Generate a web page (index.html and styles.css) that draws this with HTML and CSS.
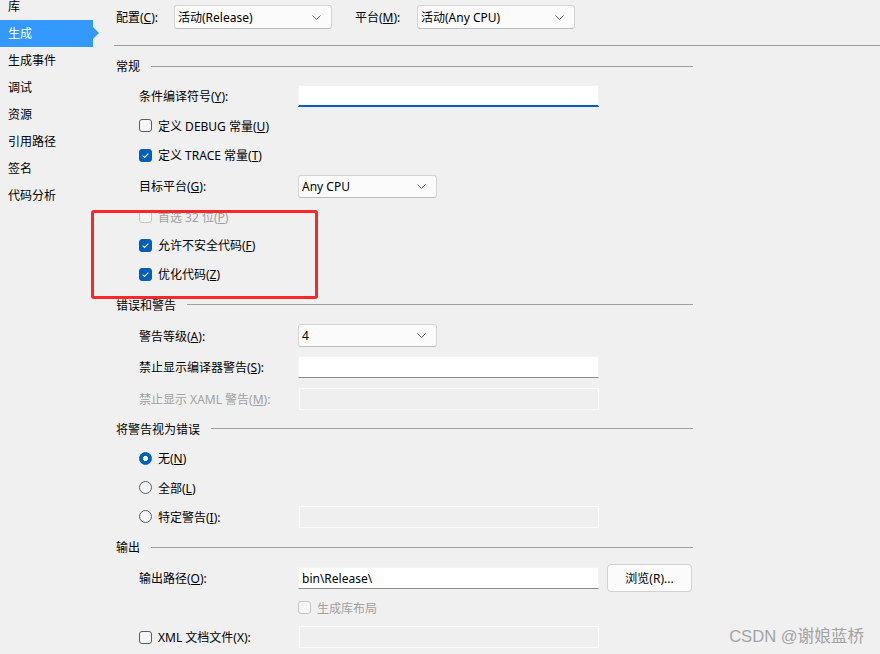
FILE: index.html
```html
<!DOCTYPE html>
<html lang="zh-CN">

<head>
    <meta charset="UTF-8">
    <title>生成</title>
    <link rel="stylesheet" href="styles.css">
</head>

<body>
    <div class="window">
        <ul class="nav">
            <li>库</li>
            <li class="active">生成</li>
            <li>生成事件</li>
            <li>调试</li>
            <li>资源</li>
            <li>引用路径</li>
            <li>签名</li>
            <li>代码分析</li>
        </ul>

        <div class="page">
            <div class="toolbar">
                <span class="tb-label">配置(<u>C</u>):</span>
                <div class="select wide"><span>活动(Release)</span><svg class="chev" width="9" height="5" viewBox="0 0 9 5"><path d="M0.5 0.5 L4.5 4.5 L8.5 0.5" fill="none" stroke="#5a5a5a"/></svg></div>
                <span class="tb-label second">平台(<u>M</u>):</span>
                <div class="select wide"><span>活动(Any CPU)</span><svg class="chev" width="9" height="5" viewBox="0 0 9 5"><path d="M0.5 0.5 L4.5 4.5 L8.5 0.5" fill="none" stroke="#5a5a5a"/></svg></div>
            </div>
            <div class="rule"></div>

            <div class="form">
                <div class="heading">常规</div>
                <div class="row">
                    <span class="label">条件编译符号(<u>Y</u>):</span>
                    <div class="input focused"></div>
                </div>
                <div class="row s">
                    <span class="box"></span><span>定义 DEBUG 常量(<u>U</u>)</span>
                </div>
                <div class="row">
                    <span class="box on"><svg width="11" height="11" viewBox="0 0 11 11"><path d="M2.6 5.7 L4.5 7.5 L8.4 3.6" fill="none" stroke="#fff" stroke-width="1.1"/></svg></span><span>定义 TRACE 常量(<u>T</u>)</span>
                </div>
                <div class="row xl">
                    <span class="label">目标平台(<u>G</u>):</span>
                    <div class="select small"><span>Any CPU</span><svg class="chev" width="9" height="5" viewBox="0 0 9 5"><path d="M0.5 0.5 L4.5 4.5 L8.5 0.5" fill="none" stroke="#5a5a5a"/></svg></div>
                </div>
                <div class="row s disabled">
                    <span class="box"></span><span>首选 32 位(<u>P</u>)</span>
                </div>
                <div class="row m">
                    <span class="box on"><svg width="11" height="11" viewBox="0 0 11 11"><path d="M2.6 5.7 L4.5 7.5 L8.4 3.6" fill="none" stroke="#fff" stroke-width="1.1"/></svg></span><span>允许不安全代码(<u>F</u>)</span>
                </div>
                <div class="row">
                    <span class="box on"><svg width="11" height="11" viewBox="0 0 11 11"><path d="M2.6 5.7 L4.5 7.5 L8.4 3.6" fill="none" stroke="#fff" stroke-width="1.1"/></svg></span><span>优化代码(<u>Z</u>)</span>
                </div>

                <div class="heading l">错误和警告</div>
                <div class="row l">
                    <span class="label">警告等级(<u>A</u>):</span>
                    <div class="select small"><span>4</span><svg class="chev" width="9" height="5" viewBox="0 0 9 5"><path d="M0.5 0.5 L4.5 4.5 L8.5 0.5" fill="none" stroke="#5a5a5a"/></svg></div>
                </div>
                <div class="row xl">
                    <span class="label">禁止显示编译器警告(<u>S</u>):</span>
                    <div class="input"></div>
                </div>
                <div class="row l disabled">
                    <span class="label">禁止显示 XAML 警告(<u>M</u>):</span>
                    <div class="input off"></div>
                </div>

                <div class="heading s">将警告视为错误</div>
                <div class="row">
                    <span class="box radio on"></span><span>无(<u>N</u>)</span>
                </div>
                <div class="row s">
                    <span class="box radio"></span><span>全部(<u>L</u>)</span>
                </div>
                <div class="row s">
                    <span class="opt"><span class="box radio"></span><span>特定警告(<u>I</u>):</span></span>
                    <div class="input off"></div>
                </div>

                <div class="heading xl">输出</div>
                <div class="row">
                    <span class="label">输出路径(<u>O</u>):</span>
                    <div class="input"><span>bin\Release\</span></div>
                    <button class="btn">浏览(R)...</button>
                </div>
                <div class="row s disabled">
                    <span class="label"></span>
                    <span class="box"></span><span>生成库布局</span>
                </div>
                <div class="row">
                    <span class="opt"><span class="box"></span><span>XML 文档文件(X):</span></span>
                    <div class="input off"></div>
                </div>
            </div>
        </div>
    </div>

    <!-- red highlight drawn over the screenshot -->
    <div class="mark"></div>
    <div class="watermark">CSDN @谢娘蓝桥</div>
</body>

</html>
```

FILE: styles.css
```css
body {
    margin: 0;
    background-color: #f0f0f0;
    font-family: "Noto Sans", "Noto Sans CJK SC", sans-serif;
    font-size: 12px;
    color: #000;
    overflow: hidden;
}

u {
    text-underline-offset: 1px;
}

.window {
    display: flex;
    height: 654px;
}

/* left navigation */
.nav {
    list-style: none;
    margin: -7px 0 0 0;
    padding: 0;
    width: 114px;
    flex-shrink: 0;
}

.nav li {
    position: relative;
    width: 93px;
    height: 27px;
    line-height: 27px;
    padding-left: 8px;
    box-sizing: border-box;
}

.nav li.active {
    background-color: #3399ff;
    color: white;
}

.nav li.active::after {
    content: "";
    position: absolute;
    right: -6px;
    top: 7px;
    border-left: 6px solid #3399ff;
    border-top: 6.5px solid transparent;
    border-bottom: 6.5px solid transparent;
}

.page {
    flex: 1;
}

.toolbar {
    display: flex;
    align-items: center;
    padding: 5px 0 0 2px;
    height: 24px;
}

.tb-label {
    width: 58px;
}

.tb-label.second {
    width: 62px;
    margin-left: 23px;
}

.rule {
    height: 1px;
    background-color: #a0a0a0;
    margin-top: 16px;
}

.form {
    width: 577px;
    margin: 5px 0 0 2px;
}

.heading {
    display: flex;
    align-items: center;
    height: 30px;
}

.heading::after {
    content: "";
    flex: 1;
    height: 1px;
    margin-left: 11px;
    background-color: #a0a0a0;
}

.row {
    display: flex;
    align-items: center;
    height: 30px;
    padding-left: 23px;
}

.m {
    height: 28px;
}

.s {
    height: 29px;
}

.l {
    height: 31px;
}

.xl {
    height: 32px;
}

.label {
    width: 159px;
    flex-shrink: 0;
}

.opt {
    display: flex;
    align-items: center;
    width: 159px;
}

.disabled {
    color: #a0a0a0;
}

/* check boxes and radios */
.box {
    display: inline-flex;
    align-items: center;
    justify-content: center;
    width: 13px;
    height: 13px;
    box-sizing: border-box;
    border: 1px solid #5c5c5c;
    border-radius: 3px;
    background-color: #f6f6f6;
    margin-right: 6px;
    flex-shrink: 0;
}

.box.on {
    background-color: #005fb8;
    border-color: #005fb8;
}

.disabled .box {
    border-color: #c4c4c4;
}

.radio {
    border-radius: 50%;
}

.radio.on {
    background: radial-gradient(circle, #fff 0 2.3px, #005fb8 2.9px);
}

/* fields */
.select {
    display: flex;
    align-items: center;
    justify-content: space-between;
    box-sizing: border-box;
    height: 24px;
    padding: 0 10px 0 3px;
    background-color: #fbfbfb;
    border: 1px solid #d4d4d4;
    border-bottom-color: #bdbdbd;
    border-radius: 3px;
}

.select.wide {
    width: 158px;
}

.select.small {
    width: 139px;
    height: 23px;
}

.input {
    display: flex;
    align-items: center;
    box-sizing: border-box;
    width: 301px;
    height: 22px;
    padding-left: 3px;
    background-color: #fff;
    border: 1px solid #f3f3f3;
    border-bottom-color: #8c8c8c;
}

.input.focused {
    border-bottom: 2px solid #005fb8;
}

.input.off {
    margin-left: 1px;
    width: 300px;
    background-color: #efefef;
    border: 1px solid #fafafa;
}

.btn {
    margin-left: 8px;
    width: 85px;
    height: 28px;
    background-color: #fbfbfb;
    border: 1px solid #d2d2d2;
    border-radius: 4px;
    font-family: inherit;
    font-size: 12px;
    color: #000;
    padding: 0;
}

/* overlays */
.mark {
    position: absolute;
    left: 91px;
    top: 210px;
    width: 227px;
    height: 89px;
    box-sizing: border-box;
    border: 3px solid #fb2727;
    border-radius: 3px;
}

.watermark {
    position: absolute;
    right: 16px;
    bottom: 7px;
    font-family: "Liberation Sans", "Noto Sans CJK SC", sans-serif;
    font-size: 16.6px;
    color: #a3a3a3;
}
```
